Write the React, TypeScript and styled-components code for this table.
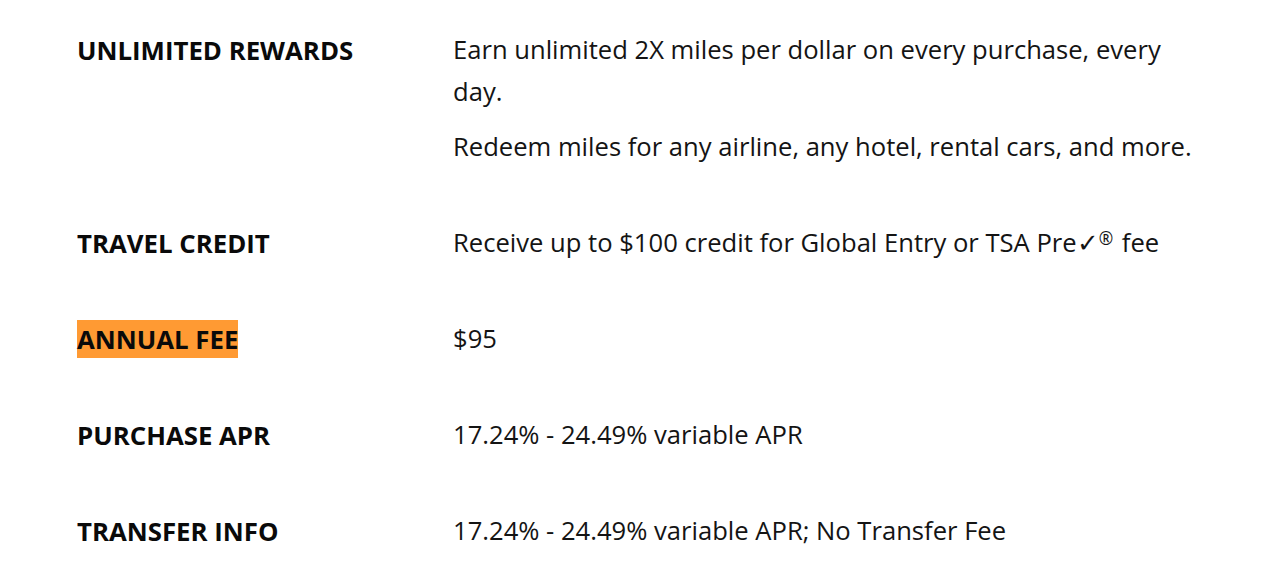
import React from 'react';
import styled, { createGlobalStyle } from 'styled-components';

type Benefit = {
  label: string;
  values: React.ReactNode[];
  highlight?: boolean;
};

const Check = styled.span`
  font-family: 'DejaVu Sans', sans-serif;
  font-weight: 300;
`;

const Sup = styled.sup`
  font-size: 0.68em;
  vertical-align: 0.4em;
  line-height: 0;
  margin-right: 2px;
`;

const benefits: Benefit[] = [
  {
    label: 'UNLIMITED REWARDS',
    values: [
      'Earn unlimited 2X miles per dollar on every purchase, every day.',
      'Redeem miles for any airline, any hotel, rental cars, and more.',
    ],
  },
  {
    label: 'TRAVEL CREDIT',
    values: [
      <>
        Receive up to $100 credit for Global Entry or TSA Pre<Check>{'\u2713'}</Check>
        <Sup>{'\u00AE'}</Sup> fee
      </>,
    ],
  },
  { label: 'ANNUAL FEE', values: ['$95'], highlight: true },
  { label: 'PURCHASE APR', values: ['17.24% - 24.49% variable APR'] },
  { label: 'TRANSFER INFO', values: ['17.24% - 24.49% variable APR; No Transfer Fee'] },
];

const GlobalStyle = createGlobalStyle`
  body {
    margin: 8px;
    background: #ffffff;
    font-family: 'Open Sans', 'Noto Sans', sans-serif;
    color: #111111;
  }
`;

const Table = styled.div`
  display: grid;
  grid-template-columns: 376px 756px;
  row-gap: 54px;
  padding: 21px 0 0 69px;
`;

const Label = styled.div`
  font-size: 25.8px;
  font-weight: 700;
  line-height: 42px;
  color: #0a0a0a;
`;

const Mark = styled.span<{ $on?: boolean }>`
  padding: 1px 0;
  background: ${(p) => (p.$on ? '#ff9a33' : 'transparent')};
`;

const Values = styled.div`
  display: flex;
  flex-direction: column;
  gap: 13px;
`;

const Value = styled.p`
  margin: 0;
  font-size: 25.6px;
  line-height: 42px;
  color: #141414;
`;

const App: React.FC = () => {
  return (
    <>
      <GlobalStyle />
      <Table>
        {benefits.map((b) => (
          <React.Fragment key={b.label}>
            <Label>
              <Mark $on={b.highlight}>{b.label}</Mark>
            </Label>
            <Values>
              {b.values.map((v, i) => (
                <Value key={i}>{v}</Value>
              ))}
            </Values>
          </React.Fragment>
        ))}
      </Table>
    </>
  );
};

export default App;
